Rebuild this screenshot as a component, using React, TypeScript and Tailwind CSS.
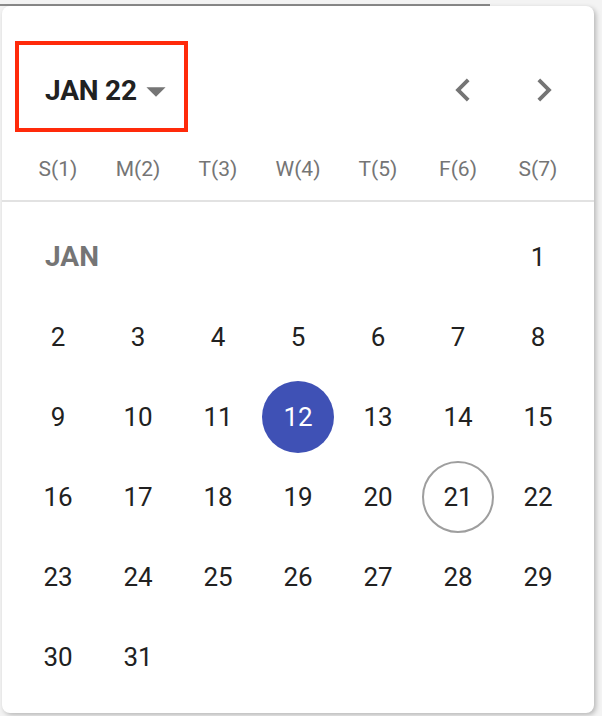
import React from "react"

const WEEKDAYS = ["S(1)", "M(2)", "T(3)", "W(4)", "T(5)", "F(6)", "S(7)"]

// Jan 2022: the 1st falls on a Saturday
const LEAD = 6
const DAYS = 31
const SELECTED = 12
const TODAY = 21

function ChevronLeft() {
  return (
    <svg viewBox="0 0 24 24" className="w-[46px] h-[46px] fill-[#757575]">
      <path d="M15.41 7.41L14 6l-6 6 6 6 1.41-1.41L10.83 12z" />
    </svg>
  )
}

function ChevronRight() {
  return (
    <svg viewBox="0 0 24 24" className="w-[46px] h-[46px] fill-[#757575]">
      <path d="M10 6L8.59 7.41 13.17 12l-4.58 4.59L10 18l6-6z" />
    </svg>
  )
}

function DropArrow() {
  return (
    <svg viewBox="0 0 24 24" className="w-[46px] h-[46px] fill-[#757575] -ml-[4px]">
      <path d="M7 10l5 5 5-5z" />
    </svg>
  )
}

function DayCell({ day }: { day: number }) {
  const selected = day === SELECTED
  const today = day === TODAY
  return (
    <div className="h-[80px] flex items-center justify-center">
      <div
        className={
          selected
            ? "w-[72px] h-[72px] rounded-full flex items-center justify-center bg-[#3f51b5] text-white"
            : today
            ? "w-[72px] h-[72px] rounded-full flex items-center justify-center border-2 border-[#9e9e9e] text-[#212121]"
            : "w-[72px] h-[72px] rounded-full flex items-center justify-center text-[#212121]"
        }
      >
        {day}
      </div>
    </div>
  )
}

export default function App() {
  const days = Array.from({ length: DAYS }, (_, i) => i + 1)
  const firstRow = days.slice(0, 7 - LEAD)
  const rest = days.slice(7 - LEAD)

  return (
    <div
      className="w-[602px] h-[716px] bg-[#f3f3f3] relative overflow-hidden"
      style={{ fontFamily: "Roboto, 'Liberation Sans', sans-serif" }}
    >
      {/* strip peeking above the card */}
      <div className="h-[4px]" />
      <div className="w-[490px] h-[2px] bg-[#8a8a8a]" />

      <div className="ml-[2px] w-[592px] h-[707px] bg-white rounded-[8px] shadow-[2px_2px_5px_rgba(0,0,0,0.25)] flex flex-col">
        {/* header */}
        <div className="flex items-center justify-between pt-[35px] pl-[13px] pr-[27px]">
          <div className="w-[173px] h-[91px] border-[4px] border-[#ff2a0a] flex items-center pl-[26px] pt-[8px]">
            <span className="text-[28px] font-bold text-[#212121] tracking-[-0.2px]">JAN 22</span>
            <DropArrow />
          </div>
          <div className="flex items-center gap-[35px] pt-[6px]">
            <ChevronLeft />
            <ChevronRight />
          </div>
        </div>

        {/* weekdays */}
        <div className="grid grid-cols-7 px-4 h-[68px] items-center pt-[8px]">
          {WEEKDAYS.map((d, i) => (
            <div key={i} className="text-center text-[21px] text-[#757575]">
              {d}
            </div>
          ))}
        </div>
        <div className="h-[2px] bg-[#e2e2e2]" />

        {/* days */}
        <div className="grid grid-cols-7 px-4 pt-[15px] text-[26px]">
          <div className="col-span-6 h-[80px] flex items-center pl-[27px] text-[28px] font-bold text-[#757575]">
            JAN
          </div>
          {firstRow.map(d => (
            <DayCell key={d} day={d} />
          ))}
          {rest.map(d => (
            <DayCell key={d} day={d} />
          ))}
        </div>
      </div>
    </div>
  )
}
